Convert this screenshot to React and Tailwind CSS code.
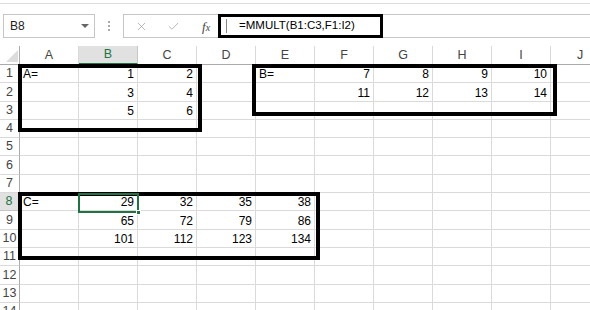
import { X, Check } from "lucide-react";

const COLS = ["A", "B", "C", "D", "E", "F", "G", "H", "I", "J"];

// sheet values keyed by row number, then column letter
const DATA = {
  1: { A: "A=", B: 1, C: 2, E: "B=", F: 7, G: 8, H: 9, I: 10 },
  2: { B: 3, C: 4, F: 11, G: 12, H: 13, I: 14 },
  3: { B: 5, C: 6 },
  8: { A: "C=", B: 29, C: 32, D: 35, E: 38 },
  9: { B: 65, C: 72, D: 79, E: 86 },
  10: { B: 101, C: 112, D: 123, E: 134 },
};

const ROWS = Array.from({ length: 14 }, (_, i) => i + 1);

function FormulaBar() {
  return (
    <div className="flex items-center h-[24px] mt-[10px]">
      {/* name box */}
      <div className="ml-[3px] w-[92px] h-full border border-[#c6c6c6] flex items-center justify-between pl-[6px] pr-[5px] text-[12px] text-[#222]">
        <span>B8</span>
        <span className="w-0 h-0 border-l-[4px] border-r-[4px] border-t-[4px] border-l-transparent border-r-transparent border-t-[#666]" />
      </div>
      <div className="w-[28px] flex flex-col items-center gap-[2px]">
        <span className="w-[2px] h-[2px] bg-[#aaa]" />
        <span className="w-[2px] h-[2px] bg-[#aaa]" />
        <span className="w-[2px] h-[2px] bg-[#aaa]" />
      </div>
      <div className="flex-1 h-full border-y border-l border-[#c6c6c6] flex items-center">
        <X className="ml-[11px] w-[13px] h-[13px] text-[#9a9a9a]" strokeWidth={1.3} />
        <Check className="ml-[19px] w-[13px] h-[13px] text-[#9a9a9a]" strokeWidth={1.3} />
        <span className="ml-[22px] text-[13px] italic text-[#444] font-['Liberation_Serif'] leading-none">
          f<span className="text-[10px]">x</span>
        </span>
        <div className="ml-[8px] h-full flex-1 flex items-center pl-[8px]">
          <span className="h-[14px] border-l border-[#888]" />
          <span className="ml-[12px] text-[11.5px] text-black">=MMULT(B1:C3,F1:I2)</span>
        </div>
      </div>
    </div>
  );
}

function Sheet() {
  return (
    <div className="mt-[8px] grid grid-cols-[20px_repeat(10,59px)] grid-rows-[19px_repeat(14,18.3px)] text-[12px]">
      {/* corner */}
      <div className="border-r border-b border-[#ababab] flex items-end justify-end pr-[1px] pb-[2px]">
        <svg width="12" height="12" viewBox="0 0 12 12">
          <polygon points="12,0 12,12 0,12" fill="#dcdcdc" />
        </svg>
      </div>
      {COLS.map((c) =>
        c === "B" ? (
          <div
            key={c}
            className="bg-[#e1e1e1] border-r border-[#c6c6c6] border-b-2 border-b-[#217346] flex items-center justify-center text-[#217346] text-[12.5px]"
          >
            {c}
          </div>
        ) : (
          <div
            key={c}
            className="border-r border-[#d9d9d9] border-b border-b-[#ababab] flex items-center justify-center text-[#444] text-[12.5px]"
          >
            {c}
          </div>
        )
      )}
      {ROWS.map((r) => (
        <Row key={r} r={r} />
      ))}
    </div>
  );
}

function Row({ r }) {
  const vals = DATA[r] || {};
  return (
    <>
      {r === 8 ? (
        <div className="bg-[#e1e1e1] border-b border-[#c6c6c6] border-r-2 border-r-[#217346] flex items-center justify-center text-[#217346] text-[12.5px]">
          {r}
        </div>
      ) : (
        <div className="border-b border-[#d9d9d9] border-r border-r-[#ababab] flex items-center justify-center text-[#444] text-[12.5px]">
          {r}
        </div>
      )}
      {COLS.map((c) => {
        const v = vals[c];
        const isNum = typeof v === "number";
        return (
          <div
            key={c}
            className={
              "border-r border-b border-[#dadada] flex items-end pb-[2px] text-black leading-none " +
              (isNum ? "justify-end pr-[3px]" : "justify-start pl-[3px]")
            }
          >
            {v}
          </div>
        );
      })}
    </>
  );
}

export default function App() {
  return (
    <div className="relative w-[590px] h-[310px] overflow-hidden bg-white font-['Liberation_Sans',Arial,sans-serif]">
      <div className="h-[4px] border-b border-[#dcdcdc]" />
      <FormulaBar />
      <Sheet />

      {/* highlight boxes drawn over the sheet */}
      <div className="absolute left-[218px] top-[14px] w-[165px] h-[24px] border-[3px] border-black" />
      <div className="absolute left-[18px] top-[64px] w-[184px] h-[68px] border-4 border-black" />
      <div className="absolute left-[252px] top-[64px] w-[305px] h-[52px] border-4 border-black" />
      <div className="absolute left-[18px] top-[192px] w-[302px] h-[68px] border-4 border-black" />

      {/* active cell B8 */}
      <div className="absolute left-[78px] top-[193px] w-[61px] h-[20px] border-2 border-[#217346]" />
      <div className="absolute left-[136px] top-[210px] w-[5px] h-[5px] bg-[#217346] border border-white" />
    </div>
  );
}
